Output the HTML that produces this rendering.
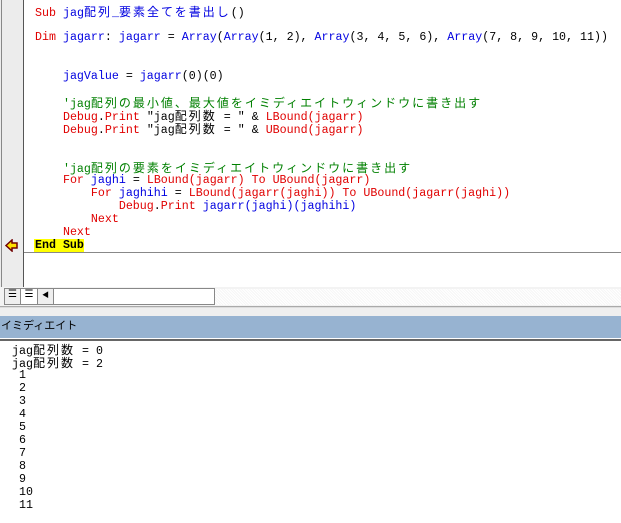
<!DOCTYPE html>
<html><head><meta charset="utf-8"><style>
body{margin:0;width:621px;height:523px;overflow:hidden;background:#fff;position:relative;font-family:"Liberation Mono","Noto Sans CJK JP",monospace;}
.code{position:absolute;left:35px;top:5px;font-size:11.65px;color:#000}
.code div,.imm div{height:13px;line-height:13px;overflow:visible;white-space:pre}
.r{color:#e00000}.b{color:#0000e0}.g{color:#008000}
.j{font-family:"Noto Sans CJK JP",sans-serif;font-size:12px;letter-spacing:2px;line-height:13px}
.imm{position:absolute;left:12px;top:343px;font-size:11.65px}
</style></head><body>
<div style="position:absolute;left:0;top:0;width:23px;height:290px;background:#ececec;border-right:1px solid #555"></div>
<div style="position:absolute;left:1px;top:0;width:1px;height:290px;background:#888"></div>
<div style="position:absolute;left:24px;top:252px;width:597px;height:1px;background:#888"></div>
<div style="position:absolute;left:34px;top:239px;width:50px;height:13px;background:#ffff00"></div>
<svg style="position:absolute;left:5px;top:239px" width="14" height="13"><path d="M1 6.5 L7 1 L7 4 L12 4 L12 9 L7 9 L7 12 Z" fill="#ffe000" stroke="#700000" stroke-width="1.5"/></svg>
<div class="code">
<div><span class="r">Sub</span> <span class="b">jag<span class="j">配列</span>_<span class="j">要素全てを書出し</span></span>()</div>
<div></div>
<div><span class="r">Dim</span> <span class="b">jagarr</span>: <span class="b">jagarr</span> = <span class="b">Array</span>(<span class="b">Array</span>(1, 2), <span class="b">Array</span>(3, 4, 5, 6), <span class="b">Array</span>(7, 8, 9, 10, 11))</div>
<div></div>
<div></div>
<div>    <span class="b">jagValue</span> = <span class="b">jagarr</span>(0)(0)</div>
<div></div>
<div>    <span class="g">'jag<span class="j">配列の最小値、最大値をイミディエイトウィンドウに書き出す</span></span></div>
<div>    <span class="r">Debug</span>.<span class="r">Print</span> "jag<span class="j">配列数</span> = " &amp; <span class="r">LBound(jagarr)</span></div>
<div>    <span class="r">Debug</span>.<span class="r">Print</span> "jag<span class="j">配列数</span> = " &amp; <span class="r">UBound(jagarr)</span></div>
<div></div>
<div></div>
<div>    <span class="g">'jag<span class="j">配列の要素をイミディエイトウィンドウに書き出す</span></span></div>
<div>    <span class="r">For</span> <span class="b">jaghi</span> = <span class="r">LBound(jagarr) To UBound(jagarr)</span></div>
<div>        <span class="r">For</span> <span class="b">jaghihi</span> = <span class="r">LBound(jagarr(jaghi)) To UBound(jagarr(jaghi))</span></div>
<div>            <span class="r">Debug</span>.<span class="r">Print</span> <span class="b">jagarr(jaghi)(jaghihi)</span></div>
<div>        <span class="r">Next</span></div>
<div>    <span class="r">Next</span></div>
<div><b>End Sub</b></div>
</div>
<div style="position:absolute;left:0;top:287px;width:621px;height:19px;background:#f3f3f3;border-bottom:1px solid #aaa"></div>
<div style="position:absolute;left:214px;top:289px;width:407px;height:16px;background:repeating-linear-gradient(45deg,#f6f6f6 0 1px,#fff 1px 2px)"></div>
<div style="position:absolute;left:4px;top:288px;width:15px;height:15px;border:1px solid #888;background:#eee;font-size:10px;text-align:center;line-height:13px">☰</div>
<div style="position:absolute;left:20px;top:288px;width:16px;height:15px;border:1px solid #888;background:#fff;font-size:10px;text-align:center;line-height:13px">☰</div>
<div style="position:absolute;left:37px;top:288px;width:15px;height:15px;border:1px solid #888;background:#eee;font-size:7px;text-align:center;line-height:15px">◀</div>
<div style="position:absolute;left:53px;top:288px;width:160px;height:15px;border:1px solid #888;background:#fff"></div>
<div style="position:absolute;left:0;top:307px;width:621px;height:9px;background:#efefef;border-top:1px solid #ddd"></div>
<div style="position:absolute;left:0;top:316px;width:621px;height:22px;background:#97b3d1;font-family:'Noto Sans CJK JP',sans-serif;font-size:11px;line-height:18px;padding-left:1px">イミディエイト</div>
<div style="position:absolute;left:0;top:339px;width:621px;height:2px;background:#666"></div>
<div class="imm">
<div>jag<span class="j">配列数</span> = 0</div>
<div>jag<span class="j">配列数</span> = 2</div>
<div> 1</div><div> 2</div><div> 3</div><div> 4</div><div> 5</div><div> 6</div><div> 7</div><div> 8</div><div> 9</div><div> 10</div><div> 11</div>
</div>
</body></html>
